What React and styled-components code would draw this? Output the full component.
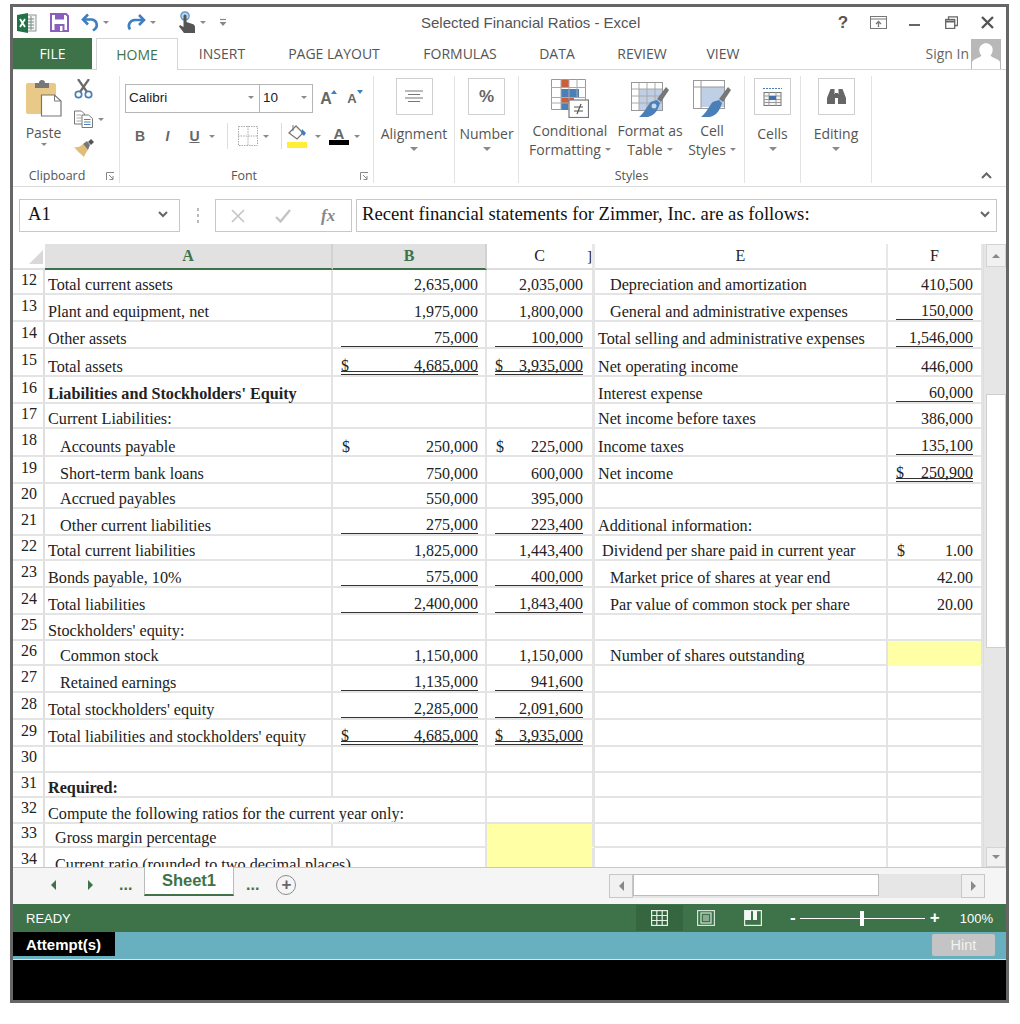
import React from 'react';
import styled, { createGlobalStyle } from 'styled-components';

const GlobalStyle = createGlobalStyle`
    html, body { margin: 0; padding: 0; background: #fff; }
    * { box-sizing: border-box; }
`;

const UI_FONT = '"Open Sans", "Noto Sans", sans-serif';
const ARIAL = '"Liberation Sans", Arial, sans-serif';
const SERIF = '"Liberation Serif", "Times New Roman", serif';
const GREEN = '#3e7349';

const Frame = styled.div`
    margin: 4px 0 0 10px;
    width: 999px;
    height: 999px;
    border: 3px solid #666;
    display: flex;
    flex-direction: column;
    overflow: hidden;
    background: #fff;
`;

/* title bar */
const TitleBar = styled.div`
    height: 31px;
    flex: none;
    display: grid;
    grid-template-columns: 408px auto 1fr;
    align-items: center;
    font-family: ${ARIAL};
`;
const QuickAccess = styled.div`
    display: flex;
    align-items: center;
    padding-left: 4px;
    height: 31px;
`;
const Title = styled.div`
    font-size: 15px;
    color: #555;
`;
const WindowButtons = styled.div`
    display: flex;
    justify-content: flex-end;
    align-items: center;
    padding-right: 1px;
`;
const WindowButton = styled.div`
    width: ${p => p.$w}px;
    display: flex;
    justify-content: center;
    color: #555;
    font-weight: bold;
    font-size: 17px;
    line-height: 1;
`;
const Caret = styled.span`
    display: inline-block;
    flex: none;
    width: 0;
    height: 0;
    border-left: ${p => p.$size || 4}px solid transparent;
    border-right: ${p => p.$size || 4}px solid transparent;
    border-top: ${p => p.$size || 4}px solid ${p => p.$color || '#8a8a8a'};
`;
const QuickSlot = styled.div`
    display: flex;
    align-items: center;
    width: ${p => p.$w}px;
    flex: none;
`;

/* ribbon tabs */
const TabStrip = styled.div`
    height: 32px;
    flex: none;
    display: flex;
    align-items: stretch;
    border-bottom: 1px solid #d6d6d6;
    font-family: ${UI_FONT};
    font-size: 14px;
    color: #555;
`;
const FileTab = styled.div`
    width: 79px;
    margin-right: 4px;
    height: 31px;
    background: ${GREEN};
    color: #fff;
    display: flex;
    align-items: center;
    justify-content: center;
`;
const Tab = styled.div`
    width: ${p => p.$w}px;
    height: ${p => (p.$active ? 32 : 31)}px;
    display: flex;
    align-items: center;
    justify-content: center;
    color: ${p => (p.$active ? GREEN : '#555')};
    background: #fff;
    ${p => p.$active && `
        border: 1px solid #d6d6d6;
        border-bottom: 0;
    `}
`;
const SignIn = styled.div`
    margin-left: auto;
    margin-right: 5px;
    display: flex;
    align-items: center;
    gap: 2px;
    height: 31px;
    color: #666;
`;
const Avatar = styled.div`
    width: 30px;
    height: 30px;
    background: #b8b8b8;
    overflow: hidden;
`;

/* ribbon */
const Ribbon = styled.div`
    height: 117px;
    flex: none;
    display: flex;
    padding: 6px 0 3px;
    border-bottom: 1px solid #dcdcdc;
    font-family: ${UI_FONT};
    font-size: 14px;
    color: #555;
    position: relative;
`;
const Group = styled.div`
    width: ${p => p.$w}px;
    flex: none;
    display: flex;
    flex-direction: column;
    border-right: 1px solid #e3e3e3;
`;
const GroupBody = styled.div`
    flex: 1;
    display: flex;
    min-height: 0;
`;
const GroupLabel = styled.div`
    height: 18px;
    flex: none;
    font-size: 12.5px;
    line-height: 22px;
    text-align: center;
    position: relative;
    padding-right: ${p => p.$shift || 0}px;
`;
const Launcher = styled.svg`
    position: absolute;
    right: 4px;
    top: 7px;
`;
const PasteColumn = styled.div`
    width: 61px;
    flex: none;
    display: flex;
    flex-direction: column;
    align-items: center;
    padding-top: 3px;
`;
const PasteText = styled.div`
    margin-top: 6px;
    line-height: 20px;
`;
const ToolColumn = styled.div`
    display: flex;
    flex-direction: column;
    gap: 11px;
    padding-top: 3px;
`;
const ToolRow = styled.div`
    display: flex;
    align-items: center;
    gap: 5px;
`;
const FontBody = styled.div`
    flex: 1;
    padding: 8px 0 0 5px;
    display: flex;
    flex-direction: column;
`;
const ComboRow = styled.div`
    display: flex;
    align-items: center;
`;
const Combo = styled.div`
    width: ${p => p.$w}px;
    height: 29px;
    border: 1px solid #b5b5b5;
    ${p => p.$joined && 'border-left: 0;'}
    display: flex;
    align-items: center;
    justify-content: space-between;
    padding: 0 5px 3px 3px;
    font-family: ${ARIAL};
    font-size: 13.5px;
    color: #222;
`;
const GrowFont = styled.span`
    font-family: ${ARIAL};
    font-size: ${p => p.$size}px;
    font-weight: bold;
    color: #666;
    position: relative;
    width: 26px;
    text-align: center;
`;
const GrowMark = styled.span`
    position: absolute;
    top: ${p => p.$top}px;
    left: 18px;
    width: 0;
    height: 0;
    border-left: 3px solid transparent;
    border-right: 3px solid transparent;
    ${p => (p.$down ? 'border-top: 4px solid #3f7fc0;' : 'border-bottom: 4px solid #3f7fc0;')}
`;
const FormatRow = styled.div`
    display: flex;
    align-items: center;
    height: 30px;
    margin-top: 8px;
`;
const FormatLetter = styled.span`
    width: ${p => p.$w || 27}px;
    text-align: center;
    flex: none;
    font-family: ${ARIAL};
    font-size: 14px;
    font-weight: bold;
    color: #666;
    font-style: ${p => (p.$italic ? 'italic' : 'normal')};
    text-decoration: ${p => (p.$under ? 'underline' : 'none')};
`;
const FormatSep = styled.span`
    width: 1px;
    height: 26px;
    background: #ddd;
    flex: none;
    margin: 0 ${p => p.$r}px 0 ${p => p.$l}px;
`;
const Spacer = styled.span`
    width: ${p => p.$w}px;
    flex: none;
`;
const ColorA = styled.span`
    display: flex;
    flex-direction: column;
    align-items: center;
    width: 20px;
    margin-left: 8px;
    margin-right: 5px;
    font-family: ${ARIAL};
    font-size: 15px;
    font-weight: bold;
    color: #666;
    line-height: 13px;
`;
const ColorBar = styled.span`
    width: 20px;
    height: 5px;
    background: #000;
`;
const BigButton = styled.div`
    display: flex;
    flex-direction: column;
    align-items: center;
    padding-top: 2px;
    width: 100%;
`;
const BoxIcon = styled.div`
    width: 37px;
    height: 37px;
    flex: none;
    border: 1px solid #d0d0d0;
    display: flex;
    align-items: center;
    justify-content: center;
    color: #666;
    font-family: ${ARIAL};
    font-size: 17px;
    font-weight: bold;
`;
const BigLabel = styled.div`
    margin-top: 9px;
    line-height: 20px;
    white-space: nowrap;
`;
const BigCaret = styled.div`
    margin-top: 3px;
    display: flex;
`;
const StyleButton = styled.div`
    width: ${p => p.$w}px;
    flex: none;
    display: flex;
    flex-direction: column;
    align-items: center;
    padding-top: 3px;
`;
const StyleLabel = styled.div`
    margin-top: 3px;
    text-align: center;
    line-height: 19px;
    white-space: nowrap;
`;
const StyleCaret = styled.span`
    display: inline-block;
    vertical-align: middle;
    margin-left: 4px;
    margin-bottom: 3px;
    border-left: 3px solid transparent;
    border-right: 3px solid transparent;
    border-top: 3px solid #888;
`;
const Collapse = styled.svg`
    position: absolute;
    right: 14px;
    top: 102px;
`;

/* formula bar */
const FormulaBar = styled.div`
    height: 57px;
    flex: none;
    display: flex;
    padding: 12px 9px 12px 6px;
    font-family: ${SERIF};
    color: #111;
`;
const NameBox = styled.div`
    width: 161px;
    height: 33px;
    border: 1px solid #c8c8c8;
    display: flex;
    align-items: center;
    justify-content: space-between;
    padding: 0 11px 3px 8px;
    font-size: 18.6px;
`;
const Dots = styled.div`
    width: 35px;
    display: flex;
    flex-direction: column;
    align-items: center;
    justify-content: center;
    gap: 3px;
`;
const Dot = styled.span`
    width: 2px;
    height: 3px;
    background: #bbb;
`;
const FormulaTools = styled.div`
    width: 137px;
    height: 33px;
    border: 1px solid #c8c8c8;
    display: flex;
    align-items: center;
    margin-right: 4px;
    padding-left: 15px;
    gap: 30px;
`;
const Fx = styled.span`
    font-size: 17px;
    font-style: italic;
    font-weight: bold;
    color: #888;
`;
const FormulaInput = styled.div`
    flex: 1;
    height: 33px;
    border: 1px solid #c8c8c8;
    display: flex;
    align-items: center;
    justify-content: space-between;
    padding: 0 6px 3px 5px;
    font-size: 18.7px;
    white-space: nowrap;
`;

/* sheet */
const SheetArea = styled.div`
    height: 623px;
    flex: none;
    display: flex;
    overflow: hidden;
    font-family: ${SERIF};
    color: #222;
`;
const Grid = styled.div`
    width: 970px;
    flex: none;
    overflow: hidden;
`;
const COLUMNS = '32px 288px 154px 108px 293px 95px';
const HeaderRow = styled.div`
    height: 26px;
    display: grid;
    grid-template-columns: ${COLUMNS};
`;
const CornerCell = styled.div`
    display: flex;
    align-items: flex-end;
    justify-content: flex-end;
    padding: 0 2px 4px 0;
    border-bottom: 2px solid #ddd;
`;
const ColumnHead = styled.div`
    display: flex;
    align-items: center;
    justify-content: center;
    padding-bottom: 1px;
    font-size: 16px;
    font-weight: ${p => (p.$selected ? 'bold' : 'normal')};
    color: ${p => (p.$selected ? GREEN : '#222')};
    background: ${p => (p.$selected ? '#e1e1e1' : '#fff')};
    border-right: ${p => (p.$thick ? 3 : 2)}px solid ${p => (p.$selected ? '#d2d2d2' : '#e8e8e8')};
    border-bottom: 2px solid ${p => (p.$selected ? GREEN : '#ddd')};
    position: relative;
`;
const HiddenColumn = styled.span`
    position: absolute;
    left: 100px;
    top: 4px;
    font-size: 15px;
`;
const Row = styled.div`
    height: ${p => p.$h}px;
    display: grid;
    grid-template-columns: ${COLUMNS};
`;
const RowNumber = styled.div`
    display: flex;
    align-items: center;
    padding: 0 0 4px 8px;
    font-size: 16px;
    border-right: 2px solid #dedede;
    border-bottom: 2px solid #e4e4e4;
    color: #222;
`;
const Cell = styled.div`
    display: flex;
    align-items: flex-end;
    padding: 0 3px 1px ${p => 3 + (p.$indent || 0)}px;
    font-size: 16.2px;
    line-height: 14px;
    white-space: nowrap;
    font-weight: ${p => (p.$bold ? 'bold' : 'normal')};
    background: ${p => (p.$fill ? '#ffffa6' : 'transparent')};
    border-right: ${p => (p.$thick ? 3 : 2)}px solid #e4e4e4;
    border-bottom: 2px solid ${p => (p.$fill ? '#ffffa6' : '#e4e4e4')};
    ${p => p.$open && 'border-right-color: transparent;'}
    min-width: 0;
`;
const AmountCell = styled(Cell)`
    padding: 0 ${p => p.$right}px 0 8px;
    font-size: 16px;
`;
const Amount = styled.div`
    width: 100%;
    display: flex;
    justify-content: space-between;
    line-height: ${p => (p.$line === 'double' ? 10 : 14)}px;
    padding: 0 0 ${p => (p.$line === 'double' ? 0 : 1)}px ${p => p.$gap || 0}px;
    ${p => p.$line === 'single' && 'border-bottom: 1.5px solid #333;'}
    ${p => p.$line === 'double' && 'border-bottom: 4px double #333;'}
`;
const ScrollBar = styled.div`
    width: 23px;
    flex: none;
    display: flex;
    flex-direction: column;
    background: #e6e6e6;
    padding-left: 2px;
    border-left: 1px solid #ddd;
`;
const ScrollButton = styled.div`
    height: ${p => p.$h}px;
    flex: none;
    background: #f1f1f1;
    border: 1px solid #d4d4d4;
    display: flex;
    align-items: center;
    justify-content: center;
`;
const ScrollGap = styled.div`
    height: ${p => p.$h}px;
    flex: none;
`;
const ScrollThumb = styled.div`
    height: 254px;
    flex: none;
    background: #fff;
    border: 1px solid #cfcfcf;
`;
const ScrollFill = styled.div`
    flex: 1;
`;
const UpCaret = styled.span`
    border-left: 4px solid transparent;
    border-right: 4px solid transparent;
    border-bottom: 4px solid #888;
`;

/* sheet tabs and horizontal scroll */
const SheetTabs = styled.div`
    height: 37px;
    flex: none;
    background: #f5f5f5;
    border-top: 1px solid #c8c8c8;
    display: flex;
    font-family: ${ARIAL};
    color: ${GREEN};
`;
const TabNav = styled.div`
    display: flex;
    align-items: center;
    height: 34px;
    padding-left: 38px;
    gap: 32px;
    width: 131px;
    flex: none;
`;
const Triangle = styled.span`
    flex: none;
    border-top: 5px solid transparent;
    border-bottom: 5px solid transparent;
    ${p => (p.$left ? `border-right: 5px solid ${p.$color || GREEN};` : `border-left: 5px solid ${p.$color || GREEN};`)}
`;
const More = styled.span`
    font-weight: bold;
    font-size: 16px;
    white-space: nowrap;
    margin-left: ${p => p.$ml || 0}px;
`;
const SheetTab = styled.div`
    width: 90px;
    height: 29px;
    margin-top: -1px;
    background: #fff;
    border: 1px solid #bbb;
    border-top: 0;
    border-bottom: 2px solid ${GREEN};
    font-size: 16.5px;
    font-weight: bold;
    display: flex;
    align-items: center;
    justify-content: center;
    flex: none;
`;
const TabTail = styled.div`
    display: flex;
    align-items: center;
    height: 33px;
    padding-left: 12px;
    gap: 17px;
    width: 375px;
    flex: none;
`;
const PlusCircle = styled.span`
    width: 20px;
    height: 20px;
    border: 1.5px solid #8c8c8c;
    border-radius: 50%;
    background: #f5f5f5;
    color: #666;
    display: flex;
    align-items: center;
    justify-content: center;
    font-size: 17px;
    font-weight: bold;
    line-height: 1;
`;
const HScroll = styled.div`
    display: flex;
    height: 24px;
    margin-top: 6px;
    width: 376px;
    background: #e6e6e6;
    flex: none;
`;
const HButton = styled.div`
    width: 24px;
    flex: none;
    background: #f1f1f1;
    border: 1px solid #c8c8c8;
    display: flex;
    align-items: center;
    justify-content: center;
`;
const HThumb = styled.div`
    width: 246px;
    flex: none;
    height: 22px;
    background: #fff;
    border: 1px solid #bdbdbd;
`;
const HFill = styled.div`
    flex: 1;
`;

/* status bar */
const StatusBar = styled.div`
    height: 28px;
    flex: none;
    background: ${GREEN};
    color: #fff;
    display: flex;
    align-items: center;
    padding: 0 13px;
    font-family: ${ARIAL};
    font-size: 13px;
`;
const StatusRight = styled.div`
    margin-left: auto;
    display: flex;
    align-items: center;
    height: 28px;
`;
const ViewButton = styled.div`
    width: 47px;
    height: 26px;
    background: ${p => (p.$active ? '#35663f' : 'transparent')};
    display: flex;
    align-items: center;
    justify-content: center;
`;
const Zoomer = styled.div`
    display: flex;
    align-items: center;
    margin-left: 9px;
`;
const ZoomSign = styled.span`
    width: ${p => p.$w}px;
    font-size: 17px;
    font-weight: bold;
    text-align: center;
`;
const ZoomTrack = styled.div`
    width: 125px;
    height: 1px;
    background: #fff;
    display: flex;
    align-items: center;
    justify-content: center;
`;
const ZoomThumb = styled.span`
    width: 4px;
    height: 15px;
    background: #fff;
`;
const ZoomValue = styled.span`
    margin-left: 15px;
    font-size: 13px;
`;

/* attempts */
const AttemptBar = styled.div`
    height: 28px;
    flex: none;
    background: #68b0c0;
    border-bottom: 1px solid #cfe7ec;
    display: flex;
    justify-content: space-between;
    align-items: flex-start;
    font-family: ${ARIAL};
`;
const AttemptLabel = styled.div`
    width: 102px;
    height: 24px;
    background: #000;
    color: #fff;
    font-size: 15px;
    font-weight: bold;
    display: flex;
    align-items: center;
    padding-left: 13px;
`;
const HintButton = styled.div`
    width: 63px;
    height: 22px;
    margin: 2px 11px 0 0;
    border-radius: 2px;
    background: #c4c4c4;
    color: #f2f2f2;
    font-size: 14.5px;
    display: flex;
    align-items: center;
    justify-content: center;
`;
const BlackPanel = styled.div`
    flex: 1;
    background: #000;
`;

/* drawings */
const ExcelIcon = () => (
    <svg width="20" height="20" viewBox="0 0 20 20">
        <rect x="9" y="2" width="10" height="16" fill="#f4f4f4" stroke="#8a9a90" />
        <path d="M11 6h6M11 9h6M11 12h6M11 15h6M14 3v14" stroke="#7b8c82" strokeWidth="1" />
        <path d="M0 2l11-2v20L0 18z" fill="#217346" />
        <path d="M3 6l5 8M8 6l-5 8" stroke="#fff" strokeWidth="1.8" />
    </svg>
);
const SaveIcon = () => (
    <svg width="19" height="19" viewBox="0 0 19 19">
        <path d="M1 1h15l2 2v15H1z" fill="#fff" stroke="#8a5fbf" strokeWidth="2" />
        <path d="M5 1.5h9v5H5z" fill="#8a5fbf" />
        <path d="M4.5 11h10v7h-10z" fill="#8a5fbf" />
        <path d="M10 13h2.5v5H10z" fill="#fff" />
    </svg>
);
const UndoIcon = () => (
    <svg width="19" height="19" viewBox="0 0 19 19" fill="none" stroke="#3f7fc0" strokeWidth="2.6">
        <path d="M7 1.5L2 6.5l5 5" />
        <path d="M2.5 6.5H11a5.5 5.5 0 0 1 3 9.5l-2 1.5" />
    </svg>
);
const RedoIcon = () => (
    <svg width="20" height="19" viewBox="0 0 20 19" fill="none" stroke="#3f7fc0" strokeWidth="2.6">
        <path d="M13 2l5 5-5 5" />
        <path d="M17.5 7H9a6 6 0 0 0-5 9.5" />
    </svg>
);
const TouchIcon = () => (
    <svg width="18" height="23" viewBox="0 0 18 23">
        <circle cx="7" cy="5" r="4.2" fill="#bcd2ea" stroke="#5a93cc" strokeWidth="1.2" />
        <path d="M5.5 5a1.5 1.5 0 0 1 3 0v6l6 2c2 .6 2.5 2 2.5 3.5V22H6L1 15.5l1-1.5 3.5 2z" fill="#555" />
    </svg>
);
const CustomizeIcon = () => (
    <svg width="8" height="9" viewBox="0 0 8 9">
        <path d="M1 1.5h6" stroke="#888" strokeWidth="1.2" />
        <path d="M0.5 4l3.5 4 3.5-4z" fill="#888" />
    </svg>
);
const HelpBoxIcon = () => (
    <svg width="17" height="13" viewBox="0 0 17 13" fill="none" stroke="#777">
        <rect x="0.5" y="0.5" width="16" height="12" />
        <path d="M0.5 3h16" />
        <path d="M8.5 11V6M6 8l2.5-2.5L11 8" strokeWidth="1.3" />
    </svg>
);
const RestoreIcon = () => (
    <svg width="13" height="13" viewBox="0 0 13 13" fill="none" stroke="#666" strokeWidth="1.3">
        <rect x="0.7" y="3.5" width="9" height="9" />
        <path d="M0.7 5.5h9" strokeWidth="2" />
        <path d="M3.5 3V0.8h9v8.7h-2.5" />
    </svg>
);
const CloseIcon = () => (
    <svg width="13" height="13" viewBox="0 0 13 13" stroke="#555" strokeWidth="2.4">
        <path d="M1 1l11 11M12 1L1 12" />
    </svg>
);
const MinimizeIcon = () => (
    <svg width="11" height="13" viewBox="0 0 11 13">
        <rect x="0" y="8" width="11" height="2" fill="#666" />
    </svg>
);
const AvatarIcon = () => (
    <svg width="30" height="30" viewBox="0 0 30 30">
        <path d="M1 30v-7c1-3 8-4 9.5-6.5C7 13 7 5 15 4c8 1 8 9 4.500 12.500C21 19 28 20 29 23v7z" fill="#fff" />
    </svg>
);
const PasteIcon = () => (
    <svg width="36" height="38" viewBox="0 0 36 38">
        <rect x="0" y="4" width="30" height="31" rx="2" fill="#e9c987" />
        <path d="M9 4h4a3 3 0 0 1 6 0h4v5H9z" fill="#777" />
        <path d="M15.5 16h13l6.500 6v15h-19.500z" fill="#fff" stroke="#777" strokeWidth="1.2" />
        <path d="M28.5 16v6H35" fill="none" stroke="#777" />
    </svg>
);
const ScissorsIcon = () => (
    <svg width="19" height="20" viewBox="0 0 19 20" fill="none">
        <path d="M4 0l9 13M15 0L6 13" stroke="#6a6a6a" strokeWidth="2.2" />
        <circle cx="4.5" cy="15.5" r="3.2" stroke="#4a7fb8" strokeWidth="1.7" />
        <circle cx="14.5" cy="15.5" r="3.2" stroke="#4a7fb8" strokeWidth="1.7" />
    </svg>
);
const CopyIcon = () => (
    <svg width="19" height="18" viewBox="0 0 19 18" fill="#fff" stroke="#777">
        <path d="M0.5 1h7l3 3v10H0.5z" />
        <path d="M2.5 5h5M2.5 8h5M2.5 11h5" stroke="#a9a9a9" />
        <path d="M8 5h6.500l4 3.500V17.500H8z" />
        <path d="M10 9.5h6.500M10 12h6.500M10 14.500h6.500" stroke="#4a7fb8" />
    </svg>
);
const BrushIcon = () => (
    <svg width="20" height="18" viewBox="0 0 20 18">
        <path d="M0 8c4 1 7-1 9-3l5 6c-2 2-3 5-4 7-3-3-7-6-10-10z" fill="#e2bd7a" />
        <path d="M9 5l4-3 3 4-2 5z" fill="#777" />
        <path d="M14 3l3-3 3 3-3 3z" fill="#555" />
    </svg>
);
const LauncherIcon = () => (
    <Launcher width="9" height="9" viewBox="0 0 9 9" fill="none" stroke="#888">
        <path d="M0.5 8V0.5H8" />
        <path d="M3 3l4 4M7 4v3.500H3.500" />
    </Launcher>
);
const BorderIcon = () => (
    <svg width="20" height="20" viewBox="0 0 20 20" fill="none" stroke="#aaa" strokeDasharray="1.5 1">
        <rect x="0.5" y="0.5" width="19" height="19" />
        <path d="M10 0v20M0 10h20" />
    </svg>
);
const FillIcon = () => (
    <svg width="20" height="24" viewBox="0 0 20 24">
        <path d="M2 9l7-7 7 7-6 6z" fill="#fff" stroke="#777" strokeWidth="1.3" />
        <path d="M6 1v6" stroke="#777" />
        <path d="M15 5l4 4-2 3-3-3z" fill="#3f7fc0" />
        <rect x="0" y="18" width="20" height="6" fill="#ffee33" />
    </svg>
);
const AlignIcon = () => (
    <svg width="18" height="13" viewBox="0 0 18 13" stroke="#777" strokeWidth="1.2">
        <path d="M0 1h18M3 4.5h12M0 8h18M3 11.5h12" />
    </svg>
);
const ConditionalIcon = () => (
    <svg width="38" height="39" viewBox="0 0 38 39">
        <path d="M0.5 0.5h34v30h-34z" fill="#fff" stroke="#999" />
        <path d="M10 1h8v7h-8z" fill="#c9603b" />
        <path d="M10 10h18v8H10z" fill="#4a7fb8" />
        <path d="M10 19h13v5H10z" fill="#c9603b" />
        <path d="M10 24h7v7h-7z" fill="#4a7fb8" />
        <path d="M10 0v31M18 0v31M26 0v18M0 8.5h35M0 18.5h35M0 24h18" stroke="#aaa" fill="none" />
        <rect x="18" y="21" width="19.5" height="17.5" fill="#fff" stroke="#777" strokeWidth="1.2" />
        <path d="M23 28h9M23 32h9M30 25l-4 10" stroke="#555" fill="none" strokeWidth="1.2" />
    </svg>
);
const TableIcon = () => (
    <svg width="38" height="39" viewBox="0 0 38 39">
        <rect x="0.5" y="3.5" width="31" height="28" fill="#fff" stroke="#999" />
        <rect x="8" y="10" width="23" height="21" fill="#bfcfe6" />
        <path d="M8 4v27M16 4v27M24 4v27M1 10h30M1 17h30M1 24h30" stroke="#aaa" fill="none" />
        <path d="M26 20l9-12 3 3-8 12z" fill="#777" />
        <path d="M26 21l3 3c-2 6-4 12-12 14H8c3-2 7-8 10-13 2-3 5-3 8-4z" fill="#4a7fb8" />
        <circle cx="23" cy="27" r="2.5" fill="#fff" opacity="0.7" />
    </svg>
);
const CellStyleIcon = () => (
    <svg width="38" height="39" viewBox="0 0 38 39">
        <rect x="0.5" y="1.5" width="31" height="28" fill="#fff" stroke="#999" />
        <rect x="8" y="8" width="23" height="20" fill="#bfcfe6" />
        <path d="M8 1v29M1 8h30" stroke="#999" fill="none" />
        <path d="M26 20l9-12 3 3-8 12z" fill="#777" />
        <path d="M26 21l3 3c-2 6-4 12-12 14H8c3-2 7-8 10-13 2-3 5-3 8-4z" fill="#4a7fb8" />
    </svg>
);
const CellsIcon = () => (
    <svg width="19" height="20" viewBox="0 0 19 20" fill="none">
        <path d="M0 1.5h19" stroke="#4a7fb8" strokeDasharray="2 1" />
        <rect x="1" y="5.5" width="17" height="13" fill="#f5f5f5" stroke="#777" />
        <path d="M1 9h17M1 12.5h17M1 15.5h17M6 5v14M13 5v14" stroke="#999" />
        <rect x="6" y="9" width="7" height="4" fill="#3f6fae" />
    </svg>
);
const BinocularsIcon = () => (
    <svg width="19" height="17" viewBox="0 0 19 17" fill="#666">
        <path d="M3.5 1h4v5H8v10H0V10z" />
        <path d="M11.5 1h4L19 10v6h-8V6h.5z" />
        <rect x="8" y="5" width="3" height="5" />
    </svg>
);
const SmallChevron = ({ color = '#666' }) => (
    <svg width="10" height="7" viewBox="0 0 10 7" fill="none" stroke={color} strokeWidth="2">
        <path d="M1 1l4 4 4-4" />
    </svg>
);
const CrossIcon = () => (
    <svg width="14" height="14" viewBox="0 0 14 14" stroke="#c4c4c4" strokeWidth="1.6">
        <path d="M1 1l12 12M13 1L1 13" />
    </svg>
);
const CheckIcon = () => (
    <svg width="16" height="14" viewBox="0 0 16 14" fill="none" stroke="#c4c4c4" strokeWidth="2.4">
        <path d="M1 8l4.5 4.5L15 1" />
    </svg>
);
const CornerTriangle = () => (
    <svg width="14" height="14" viewBox="0 0 14 14">
        <path d="M14 0v14H0z" fill="#d9d9d9" />
    </svg>
);
const NormalViewIcon = () => (
    <svg width="17" height="16" viewBox="0 0 17 16" fill="none" stroke="#e4efe6" strokeWidth="1.2">
        <rect x="0.6" y="0.6" width="15.8" height="14.8" />
        <path d="M0 5.5h17M0 10.5h17M5.8 0v16M11.2 0v16" />
    </svg>
);
const LayoutViewIcon = () => (
    <svg width="18" height="16" viewBox="0 0 18 16" fill="none" stroke="#d4e3d8" strokeWidth="1.2">
        <rect x="0.6" y="0.6" width="16.8" height="14.8" />
        <rect x="4" y="3" width="10" height="10" />
        <path d="M6 6h6M6 8h6M6 10h6" />
    </svg>
);
const BreakViewIcon = () => (
    <svg width="18" height="16" viewBox="0 0 18 16">
        <rect x="0.6" y="0.6" width="16.8" height="14.8" fill="none" stroke="#e4efe6" strokeWidth="1.2" />
        <rect x="1" y="1" width="6" height="9" fill="#f4f7f4" />
        <rect x="9" y="1" width="4" height="9" fill="#f4f7f4" />
    </svg>
);

const num = (v, line, cur) => ({ v, line, cur });

const rows = [
    { n: 12, h: 25, a: 'Total current assets', b: num('2,635,000'), c: num('2,035,000'), e: 'Depreciation and amortization', ei: 12, f: num('410,500') },
    { n: 13, h: 27, a: 'Plant and equipment, net', b: num('1,975,000'), c: num('1,800,000'), e: 'General and administrative expenses', ei: 12, f: num('150,000', 'single') },
    { n: 14, h: 27, a: 'Other assets', b: num('75,000', 'single'), c: num('100,000', 'single'), e: 'Total selling and administrative expenses', f: num('1,546,000', 'single') },
    { n: 15, h: 28, a: 'Total assets', b: num('4,685,000', 'double', '$'), c: num('3,935,000', 'double', '$'), e: 'Net operating income', f: num('446,000') },
    { n: 16, h: 27, a: "Liabilities and Stockholders' Equity", bold: true, e: 'Interest expense', f: num('60,000', 'single') },
    { n: 17, h: 25, a: 'Current Liabilities:', e: 'Net income before taxes', f: num('386,000') },
    { n: 18, h: 28, a: 'Accounts payable', ai: 12, b: num('250,000', null, '$'), c: num('225,000', null, '$'), e: 'Income taxes', f: num('135,100', 'single') },
    { n: 19, h: 27, a: 'Short-term bank loans', ai: 12, b: num('750,000'), c: num('600,000'), e: 'Net income', f: num('250,900', 'double', '$') },
    { n: 20, h: 25, a: 'Accrued payables', ai: 12, b: num('550,000'), c: num('395,000') },
    { n: 21, h: 27, a: 'Other current liabilities', ai: 12, b: num('275,000', 'single'), c: num('223,400', 'single'), e: 'Additional information:' },
    { n: 22, h: 25, a: 'Total current liabilities', b: num('1,825,000'), c: num('1,443,400'), e: 'Dividend per share paid in current year', ei: 4, f: num('1.00', null, '$') },
    { n: 23, h: 27, a: 'Bonds payable, 10%', b: num('575,000', 'single'), c: num('400,000', 'single'), e: 'Market price of shares at year end', ei: 12, f: num('42.00') },
    { n: 24, h: 27, a: 'Total liabilities', b: num('2,400,000', 'single'), c: num('1,843,400', 'single'), e: 'Par value of common stock per share', ei: 12, f: num('20.00') },
    { n: 25, h: 26, a: "Stockholders' equity:" },
    { n: 26, h: 25, a: 'Common stock', ai: 12, b: num('1,150,000'), c: num('1,150,000'), e: 'Number of shares outstanding', ei: 12, fFill: true },
    { n: 27, h: 27, a: 'Retained earnings', ai: 12, b: num('1,135,000', 'single'), c: num('941,600', 'single') },
    { n: 28, h: 27, a: "Total stockholders' equity", b: num('2,285,000', 'single'), c: num('2,091,600', 'single') },
    { n: 29, h: 27, a: "Total liabilities and stockholders' equity", b: num('4,685,000', 'double', '$'), c: num('3,935,000', 'double', '$') },
    { n: 30, h: 26 },
    { n: 31, h: 25, a: 'Required:', bold: true },
    { n: 32, h: 26, a: 'Compute the following ratios for the current year only:', open: true },
    { n: 33, h: 24, a: 'Gross margin percentage', ai: 7, cFill: true },
    { n: 34, h: 27, a: 'Current ratio (rounded to two decimal places)', ai: 7, cFill: true, open: true },
];

const AmountValue = ({ item, right, fill, thick }) => (
    <AmountCell $right={right} $fill={fill} $thick={thick}>
        {item && (
            <Amount $line={item.line} $gap={item.line ? 0 : 1}>
                <span>{item.cur}</span>
                <span>{item.v}</span>
            </Amount>
        )}
    </AmountCell>
);

const StyleItem = ({ w, icon, top, bottom }) => (
    <StyleButton $w={w}>
        {icon}
        <StyleLabel>
            {top}
            <br />
            {bottom}
            <StyleCaret />
        </StyleLabel>
    </StyleButton>
);

const BigItem = ({ icon, label }) => (
    <BigButton>
        <BoxIcon>{icon}</BoxIcon>
        <BigLabel>{label}</BigLabel>
        <BigCaret><Caret $size={4} /></BigCaret>
    </BigButton>
);

export default function App() {
    return (
        <>
            <GlobalStyle />
            <Frame>
                <TitleBar>
                    <QuickAccess>
                        <QuickSlot $w={33}><ExcelIcon /></QuickSlot>
                        <QuickSlot $w={31}><SaveIcon /></QuickSlot>
                        <QuickSlot $w={22}><UndoIcon /></QuickSlot>
                        <QuickSlot $w={23}><Caret $size={3} /></QuickSlot>
                        <QuickSlot $w={24}><RedoIcon /></QuickSlot>
                        <QuickSlot $w={28}><Caret $size={3} /></QuickSlot>
                        <QuickSlot $w={22}><TouchIcon /></QuickSlot>
                        <QuickSlot $w={19}><Caret $size={3} /></QuickSlot>
                        <QuickSlot $w={10}><CustomizeIcon /></QuickSlot>
                    </QuickAccess>
                    <Title>Selected Financial Ratios - Excel</Title>
                    <WindowButtons>
                        <WindowButton $w={36}>?</WindowButton>
                        <WindowButton $w={34}><HelpBoxIcon /></WindowButton>
                        <WindowButton $w={38}><MinimizeIcon /></WindowButton>
                        <WindowButton $w={36}><RestoreIcon /></WindowButton>
                        <WindowButton $w={36}><CloseIcon /></WindowButton>
                    </WindowButtons>
                </TitleBar>

                <TabStrip>
                    <FileTab>FILE</FileTab>
                    <Tab $w={82} $active>HOME</Tab>
                    <Tab $w={88}>INSERT</Tab>
                    <Tab $w={136}>PAGE LAYOUT</Tab>
                    <Tab $w={116}>FORMULAS</Tab>
                    <Tab $w={78}>DATA</Tab>
                    <Tab $w={92}>REVIEW</Tab>
                    <Tab $w={70}>VIEW</Tab>
                    <SignIn>
                        Sign In
                        <Avatar><AvatarIcon /></Avatar>
                    </SignIn>
                </TabStrip>

                <Ribbon>
                    <Group $w={107}>
                        <GroupBody>
                            <PasteColumn>
                                <PasteIcon />
                                <PasteText>Paste</PasteText>
                                <Caret $size={3} />
                            </PasteColumn>
                            <ToolColumn>
                                <ToolRow><ScissorsIcon /></ToolRow>
                                <ToolRow><CopyIcon /><Caret $size={3} /></ToolRow>
                                <ToolRow><BrushIcon /></ToolRow>
                            </ToolColumn>
                        </GroupBody>
                        <GroupLabel $shift={18}>Clipboard<LauncherIcon /></GroupLabel>
                    </Group>
                    <Group $w={254}>
                        <FontBody>
                            <ComboRow>
                                <Combo $w={135}>Calibri<Caret $size={3} /></Combo>
                                <Combo $w={53} $joined>10<Caret $size={3} /></Combo>
                                <GrowFont $size={16}>A<GrowMark $top={0} /></GrowFont>
                                <GrowFont $size={13}>A<GrowMark $top={-1} $down /></GrowFont>
                            </ComboRow>
                            <FormatRow>
                                <FormatLetter $w={30}>B</FormatLetter>
                                <FormatLetter $w={25} $italic>I</FormatLetter>
                                <FormatLetter $w={29} $under>U</FormatLetter>
                                <Caret $size={3} />
                                <FormatSep $l={12} $r={10} />
                                <BorderIcon />
                                <Spacer $w={5} />
                                <Caret $size={3} />
                                <FormatSep $l={12} $r={5} />
                                <FillIcon />
                                <Spacer $w={8} />
                                <Caret $size={3} />
                                <ColorA>A<ColorBar /></ColorA>
                                <Caret $size={3} />
                            </FormatRow>
                        </FontBody>
                        <GroupLabel $shift={5}>Font<LauncherIcon /></GroupLabel>
                    </Group>
                    <Group $w={81}>
                        <GroupBody><BigItem icon={<AlignIcon />} label="Alignment" /></GroupBody>
                        <GroupLabel />
                    </Group>
                    <Group $w={64}>
                        <GroupBody><BigItem icon="%" label="Number" /></GroupBody>
                        <GroupLabel />
                    </Group>
                    <Group $w={226}>
                        <GroupBody>
                            <StyleItem w={102} icon={<ConditionalIcon />} top="Conditional" bottom="Formatting" />
                            <StyleItem w={58} icon={<TableIcon />} top="Format as" bottom="Table" />
                            <StyleItem w={66} icon={<CellStyleIcon />} top="Cell" bottom="Styles" />
                        </GroupBody>
                        <GroupLabel>Styles</GroupLabel>
                    </Group>
                    <Group $w={56}>
                        <GroupBody><BigItem icon={<CellsIcon />} label="Cells" /></GroupBody>
                        <GroupLabel />
                    </Group>
                    <Group $w={71}>
                        <GroupBody><BigItem icon={<BinocularsIcon />} label="Editing" /></GroupBody>
                        <GroupLabel />
                    </Group>
                    <Collapse width="11" height="7" viewBox="0 0 11 7" fill="none" stroke="#666" strokeWidth="2">
                        <path d="M1 6l4.5-4.5L10 6" />
                    </Collapse>
                </Ribbon>

                <FormulaBar>
                    <NameBox>A1<SmallChevron /></NameBox>
                    <Dots><Dot /><Dot /><Dot /></Dots>
                    <FormulaTools>
                        <CrossIcon />
                        <CheckIcon />
                        <Fx>fx</Fx>
                    </FormulaTools>
                    <FormulaInput>
                        Recent financial statements for Zimmer, Inc. are as follows:
                        <SmallChevron />
                    </FormulaInput>
                </FormulaBar>

                <SheetArea>
                    <Grid>
                        <HeaderRow>
                            <CornerCell><CornerTriangle /></CornerCell>
                            <ColumnHead $selected>A</ColumnHead>
                            <ColumnHead $selected>B</ColumnHead>
                            <ColumnHead $thick>C<HiddenColumn>]</HiddenColumn></ColumnHead>
                            <ColumnHead>E</ColumnHead>
                            <ColumnHead>F</ColumnHead>
                        </HeaderRow>
                        {rows.map(row => (
                            <Row key={row.n} $h={row.h}>
                                <RowNumber>{row.n}</RowNumber>
                                <Cell $indent={row.ai} $bold={row.bold} $open={row.open}>{row.a}</Cell>
                                <AmountValue item={row.b} right={7} />
                                <AmountValue item={row.c} right={9} fill={row.cFill} thick />
                                <Cell $indent={row.ei}>{row.e}</Cell>
                                <AmountValue item={row.f} right={8} fill={row.fFill} />
                            </Row>
                        ))}
                    </Grid>
                    <ScrollBar>
                        <ScrollButton $h={23}><UpCaret /></ScrollButton>
                        <ScrollGap $h={127} />
                        <ScrollThumb />
                        <ScrollFill />
                        <ScrollButton $h={20}><Caret $size={4} /></ScrollButton>
                    </ScrollBar>
                </SheetArea>

                <SheetTabs>
                    <TabNav>
                        <Triangle $left />
                        <Triangle />
                        <More $ml={-6}>...</More>
                    </TabNav>
                    <SheetTab>Sheet1</SheetTab>
                    <TabTail>
                        <More>...</More>
                        <PlusCircle>+</PlusCircle>
                    </TabTail>
                    <HScroll>
                        <HButton><Triangle $left $color="#888" /></HButton>
                        <HThumb />
                        <HFill />
                        <HButton><Triangle $color="#888" /></HButton>
                    </HScroll>
                </SheetTabs>

                <StatusBar>
                    READY
                    <StatusRight>
                        <ViewButton $active><NormalViewIcon /></ViewButton>
                        <ViewButton><LayoutViewIcon /></ViewButton>
                        <ViewButton><BreakViewIcon /></ViewButton>
                        <Zoomer>
                            <ZoomSign $w={14}>-</ZoomSign>
                            <ZoomTrack><ZoomThumb /></ZoomTrack>
                            <ZoomSign $w={20}>+</ZoomSign>
                            <ZoomValue>100%</ZoomValue>
                        </Zoomer>
                    </StatusRight>
                </StatusBar>

                <AttemptBar>
                    <AttemptLabel>Attempt(s)</AttemptLabel>
                    <HintButton>Hint</HintButton>
                </AttemptBar>
                <BlackPanel />
            </Frame>
        </>
    );
}
